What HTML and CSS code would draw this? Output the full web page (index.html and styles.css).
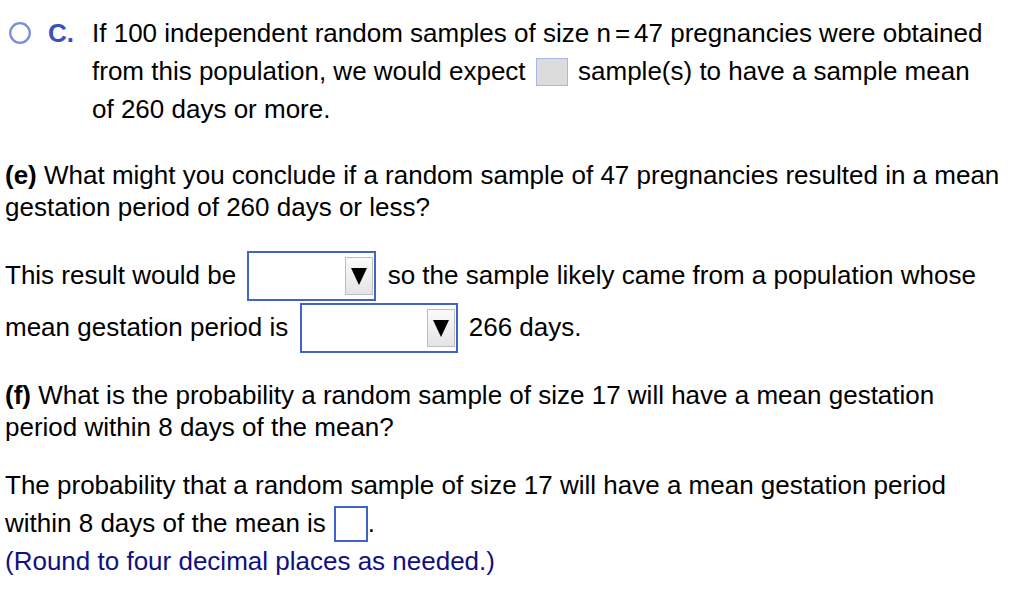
FILE: index.html
```html
<!DOCTYPE html>
<html lang="en">
<head>
<meta charset="utf-8">
<title>Sampling distribution question</title>
<link rel="stylesheet" href="styles.css">
</head>
<body>
<div class="page">
  <div class="option">
    <span class="radio"><svg width="24" height="24" viewBox="0 0 24 24"><circle cx="12" cy="12" r="9.8" fill="#fff" stroke="#7b8ddc" stroke-width="2.3"/></svg></span>
    <span class="opt-label">C.</span>
    <div class="opt-text">If 100 independent random samples of size n<span class="eq">=</span>47 pregnancies were obtained from this population, we would expect <span class="ans-gray"></span> sample(s) to have a sample mean of 260 days or more.</div>
  </div>

  <p class="question"><b>(e)</b> What might you conclude if a random sample of 47 pregnancies resulted in a mean gestation period of 260 days or less?</p>

  <p class="drops">This result would be <span class="select s1"><span class="arrow"><span class="tri"></span></span></span> so the sample likely came from a population whose mean gestation period is <span class="select s2"><span class="arrow"><span class="tri"></span></span></span> 266 days.</p>

  <p class="question q-f"><b>(f)</b> What is the probability a random sample of size 17 will have a mean gestation period within 8 days of the mean?</p>

  <p class="answer">The probability that a random sample of size 17 will have a mean gestation period within 8 days of the mean is<span class="ans-box"></span>.<br><span class="hint">(Round to four decimal places as needed.)</span></p>
</div>
</body>
</html>
```

FILE: styles.css
```css
html, body {
  margin: 0;
  padding: 0;
  background: #fff;
}

.page {
  font-family: "Liberation Sans", Arial, Helvetica, sans-serif;
  font-size: 26px;
  color: #000;
  padding: 14px 0 0 5px;
  width: 1005px;
}

.option {
  display: flex;
  align-items: flex-start;
  line-height: 38px;
}

.radio {
  width: 24px;
  height: 38px;
  margin-left: 3px;
  display: flex;
  align-items: center;
}

.radio svg {
  display: block;
}

.opt-label {
  color: #3a4fc4;
  font-weight: bold;
  margin-left: 16px;
  width: 44px;
}

.opt-text {
  width: 896px;
}

.eq {
  margin: 0 4px;
}

.ans-gray {
  display: inline-block;
  width: 30px;
  height: 26px;
  background: #dcdcdc;
  border: 1px solid #a7b6e6;
  vertical-align: middle;
  margin: -4px 3px;
  position: relative;
  top: -1px;
}

p {
  margin: 0;
}

.question {
  line-height: 32px;
  margin-top: 31px;
}

.drops {
  line-height: 52px;
  margin-top: 26px;
}

.select {
  display: inline-flex;
  justify-content: flex-end;
  align-items: center;
  box-sizing: border-box;
  height: 50px;
  border: 2px solid #3f63c9;
  background: #fff;
  vertical-align: middle;
  padding-right: 1px;
  margin: -2px 4px;
  position: relative;
  top: -1px;
}

.s1 { width: 129px; }
.s2 { width: 158px; }

.arrow {
  box-sizing: border-box;
  width: 28px;
  height: 38px;
  border: 1px solid #bdbdbd;
  background: linear-gradient(#fbfbfb, #e4e4e4);
  display: flex;
  align-items: center;
  justify-content: center;
}

.tri {
  width: 0;
  height: 0;
  border-left: 8.5px solid transparent;
  border-right: 8.5px solid transparent;
  border-top: 17px solid #000;
}

.q-f {
  margin-top: 26px;
}

.answer {
  line-height: 38px;
  margin-top: 23px;
}

.ans-box {
  display: inline-block;
  box-sizing: border-box;
  width: 34px;
  height: 36px;
  border: 2px solid #3f63c9;
  background: #fff;
  vertical-align: middle;
  margin: -6px 0 -6px 8px;
  position: relative;
  top: -1px;
}

.hint {
  color: #101083;
}
```
